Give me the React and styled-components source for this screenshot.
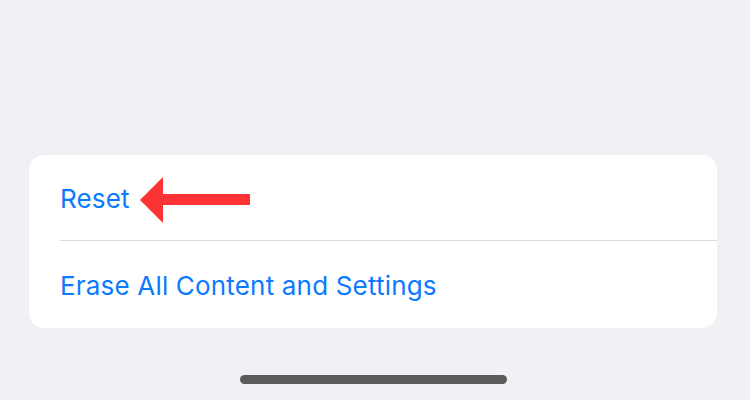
import React from "react";
import styled, { createGlobalStyle } from "styled-components";

const GlobalStyle = createGlobalStyle`
  html, body {
    margin: 0;
    padding: 0;
    background: #f1f0f5;
  }
  body {
    font-family: Inter, "Liberation Sans", sans-serif;
    -webkit-font-smoothing: antialiased;
  }
`;

const Screen = styled.div`
  width: 750px;
  height: 400px;
  padding-left: 29px;
  box-sizing: border-box;
  display: flex;
  flex-direction: column;
  overflow: hidden;
`;

const Card = styled.div`
  margin-top: 155px;
  width: 688px;
  background: #ffffff;
  border-radius: 15px;
  overflow: hidden;
`;

const Row = styled.div`
  display: flex;
  align-items: center;
  gap: 10px;
  height: ${props => props.height}px;
  padding-left: 31px;
`;

const Divider = styled.div`
  height: 1px;
  margin-left: 31px;
  background: #dcdce0;
`;

const Label = styled.span`
  color: #0a7aff;
  font-size: 26px;
  letter-spacing: 0.18px;
  padding-top: 2px;
`;

const ArrowSvg = styled.svg`
  margin-top: 7px;
  flex-shrink: 0;
`;

const HomeIndicator = styled.div`
  margin-top: 47px;
  margin-left: 211px;
  width: 267px;
  height: 9px;
  border-radius: 5px;
  background: #5b5b5b;
`;

const Arrow = () => (
  <ArrowSvg width="110" height="48" viewBox="0 0 110 48">
    <polygon points="0,23 23,0 23,17 110,17 110,28 23,28 23,46" fill="#fe3335" />
  </ArrowSvg>
);

export default function App() {
  return (
    <>
      <GlobalStyle />
      <Screen>
        <Card>
          <Row height={85}>
            <Label>Reset</Label>
            <Arrow />
          </Row>
          <Divider />
          <Row height={87}>
            <Label>Erase All Content and Settings</Label>
          </Row>
        </Card>
        <HomeIndicator />
      </Screen>
    </>
  );
}
